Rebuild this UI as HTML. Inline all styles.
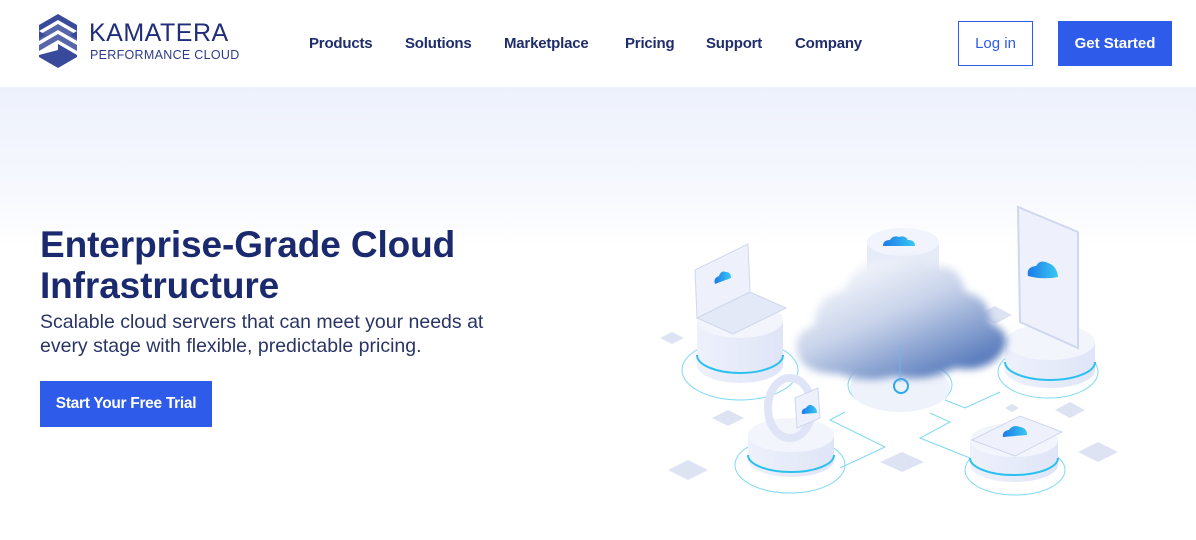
<!DOCTYPE html>
<html><head><meta charset="utf-8"><style>
*{margin:0;padding:0;box-sizing:border-box}
body{width:1196px;height:540px;overflow:hidden;font-family:"Liberation Sans",Arial,sans-serif;background:#fff;position:relative}
.hero{position:absolute;top:87px;left:0;width:1196px;height:453px;background:linear-gradient(#edf1fc 0%,#f7f9fe 25%,#fff 35%)}
.nav a{position:absolute;top:35px;font-size:15px;font-weight:bold;color:#1f2d6b;text-decoration:none;letter-spacing:-0.2px}
.login{position:absolute;left:958px;top:21px;width:75px;height:45px;border:1px solid #2f5bea;color:#2f5bea;font-size:15px;display:flex;align-items:center;justify-content:center}
.gs{position:absolute;left:1058px;top:21px;width:114px;height:45px;background:#2f5bea;color:#fff;font-size:15px;font-weight:bold;display:flex;align-items:center;justify-content:center}
h1{position:absolute;left:40px;top:224px;font-size:37px;line-height:41px;color:#1b2a6e;font-weight:bold;letter-spacing:-0.1px}
p.sub{position:absolute;left:40px;top:310px;font-size:19.5px;line-height:24px;color:#2a3566;width:470px}
.cta{position:absolute;left:40px;top:381px;width:172px;height:46px;background:#2f5bea;color:#fff;font-size:15.5px;font-weight:bold;display:flex;align-items:center;justify-content:center;letter-spacing:-0.3px}
</style></head><body>
<div class="hero"></div>
<svg style="position:absolute;left:38px;top:14px" width="40" height="54" viewBox="0 0 40 54">
<g fill="#3a4a9a">
<polygon points="20,0 39,11 39,17 20,6 1,17 1,11"/>
<polygon points="20,10 39,21 39,27 20,16 1,27 1,21" opacity=".85"/>
<polygon points="20,20 39,31 39,37 20,26 1,37 1,31" opacity=".85"/>
<polygon points="20,30 39,41 39,43 20,54 1,43 1,41 20,36" />
<polygon points="1,17 8,21 1,25" /><polygon points="39,17 32,21 39,25"/>
</g></svg>
<div style="position:absolute;left:89px;top:19px;font-size:25px;color:#1f2d7a;letter-spacing:0.5px;font-weight:500">KAMATERA</div>
<div style="position:absolute;left:90px;top:48px;font-size:12.5px;color:#2d3c8a;letter-spacing:0.3px">PERFORMANCE CLOUD</div>
<div class="nav"><a style="left:309px">Products</a><a style="left:405px">Solutions</a><a style="left:504px">Marketplace</a><a style="left:625px">Pricing</a><a style="left:706px">Support</a><a style="left:795px">Company</a></div>
<div class="login">Log in</div><div class="gs">Get Started</div>
<h1>Enterprise-Grade Cloud<br>Infrastructure</h1>
<p class="sub">Scalable cloud servers that can meet your needs at every stage with flexible, predictable pricing.</p>
<div class="cta">Start Your Free Trial</div>
<svg style="position:absolute;left:650px;top:200px" width="480" height="300" viewBox="650 200 480 300">
<defs>
<linearGradient id="cyl" x1="0" x2="1"><stop offset="0" stop-color="#eef1fb"/><stop offset="1" stop-color="#dfe5f7"/></linearGradient>
<linearGradient id="cl" x1="0.2" y1="0.1" x2="0.8" y2="0.9"><stop offset="0" stop-color="#f7f8fc"/><stop offset=".45" stop-color="#c8d3ea"/><stop offset="1" stop-color="#5a7dbd"/></linearGradient>
<linearGradient id="ic" x1="0" x2="1"><stop offset="0" stop-color="#1e7ae8"/><stop offset="1" stop-color="#38c8f0"/></linearGradient>
<filter id="bl" x="-20%" y="-20%" width="140%" height="140%"><feGaussianBlur stdDeviation="4"/></filter>
</defs>
<g fill="#dde3f2">
<polygon points="660,338 672,332 684,338 672,344"/><polygon points="668,470 688,460 708,470 688,480"/>
<polygon points="712,418 728,410 744,418 728,426"/><polygon points="880,462 902,452 924,462 902,472"/>
<polygon points="978,315 995,306 1012,315 995,324"/><polygon points="1055,410 1070,402 1085,410 1070,418"/>
<polygon points="1078,452 1098,442 1118,452 1098,462"/><polygon points="1005,408 1012,404 1019,408 1012,412"/>
</g>
<g fill="none" stroke="#5fd0f0" stroke-width="1" opacity=".8">
<ellipse cx="740" cy="370" rx="58" ry="30"/><ellipse cx="1048" cy="372" rx="50" ry="26"/>
<ellipse cx="790" cy="465" rx="55" ry="28"/><ellipse cx="1015" cy="470" rx="50" ry="25"/>
<ellipse cx="900" cy="385" rx="52" ry="26"/>
<path d="M845,412 L830,420 L885,447 L840,468"/><path d="M930,413 L950,422 L920,438 L975,460"/>
<path d="M945,400 L965,408 L1000,392"/>
</g>
<ellipse cx="900" cy="388" rx="50" ry="24" fill="#eef2fb"/>
<circle cx="901" cy="386" r="7" fill="none" stroke="#2aa8f0" stroke-width="2"/>
<g>
<path d="M697,320 v45 a43,18 0 0 0 86,0 v-45z" fill="url(#cyl)"/><ellipse cx="740" cy="320" rx="43" ry="18" fill="#f3f5fc"/>
<path d="M697,355 a43,18 0 0 0 86,0" fill="none" stroke="#2bc0f0" stroke-width="2"/>
<path d="M1005,342 v28 a45,18 0 0 0 90,0 v-28z" fill="url(#cyl)"/><ellipse cx="1050" cy="342" rx="45" ry="18" fill="#f3f5fc"/>
<path d="M1005,362 a45,18 0 0 0 90,0" fill="none" stroke="#2bc0f0" stroke-width="2"/>
<path d="M748,435 v25 a43,17 0 0 0 86,0 v-25z" fill="url(#cyl)"/><ellipse cx="791" cy="435" rx="43" ry="17" fill="#f3f5fc"/>
<path d="M748,455 a43,17 0 0 0 86,0" fill="none" stroke="#2bc0f0" stroke-width="2"/>
<path d="M970,440 v25 a44,17 0 0 0 88,0 v-25z" fill="url(#cyl)"/><ellipse cx="1014" cy="440" rx="44" ry="17" fill="#f3f5fc"/>
<path d="M970,458 a44,17 0 0 0 88,0" fill="none" stroke="#2bc0f0" stroke-width="2"/>
<path d="M867,242 v50 a36,14 0 0 0 72,0 v-50z" fill="#e6ebf8"/><ellipse cx="903" cy="242" rx="36" ry="14" fill="#f1f4fc"/>
</g>
<polygon points="695,270 748,244 750,292 697,318" fill="#eef1fb" stroke="#cfd7ee"/>
<polygon points="697,318 750,292 786,308 733,334" fill="#e4e9f7" stroke="#cfd7ee"/>
<polygon points="1018,207 1078,232 1078,348 1020,322" fill="#eef1fb" stroke="#cfd7ee" stroke-width="2"/>
<polygon points="972,440 1020,416 1062,432 1015,456" fill="#eef1fb" stroke="#cfd7ee"/>
<ellipse cx="790" cy="408" rx="22" ry="30" fill="none" stroke="#dfe5f7" stroke-width="8"/>
<polygon points="795,398 818,388 820,418 797,428" fill="#eef1fb" stroke="#cfd7ee"/>
<g fill="url(#ic)">
<path d="M883,246 q0,-6 7,-6 q3,-5 9,-3 q6,-2 9,3 q7,0 7,6z"/>
<path d="M715,284 q-2,-6 4,-8 q2,-6 7,-4 q5,0 5,6 z"/>
<path d="M1028,276 q-2,-9 8,-10 q4,-7 12,-3 q9,3 10,14 q-15,3 -30,-1z"/>
<path d="M1003,437 q-1,-6 6,-7 q4,-6 11,-3 q7,1 7,8z"/>
<path d="M802,414 q-1,-5 4,-6 q3,-5 7,-2 q4,2 4,7z"/>
</g>
<g fill="url(#cl)" filter="url(#bl)">
<path d="M800,360 q-12,-25 15,-35 q0,-30 30,-35 q10,-30 40,-28 q25,-15 45,5 q30,-5 35,25 q25,5 25,30 q30,15 5,38 q-15,12 -40,8 q-30,15 -60,8 q-30,8 -55,-2 q-30,0 -40,-14z"/>
</g>
<line x1="900" y1="345" x2="900" y2="382" stroke="#6ab8ee" stroke-width="1"/>
</svg>
</body></html>
